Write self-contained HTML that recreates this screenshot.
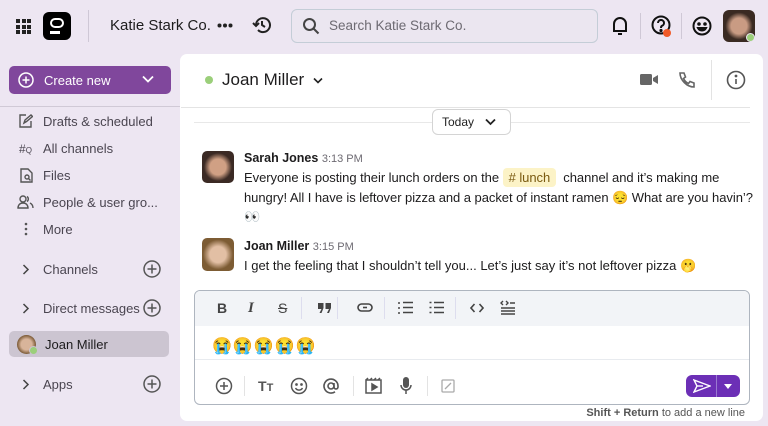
<!DOCTYPE html>
<html><head><meta charset="utf-8"><style>
*{box-sizing:border-box;margin:0;padding:0}
body{width:768px;height:426px;background:#ede6f2;font-family:"Liberation Sans","Noto Sans CJK SC",sans-serif;position:relative;overflow:hidden;color:#1d1c1d}
.a{position:absolute}
.side{font-size:13px;color:#4a4550;white-space:nowrap}
svg{display:block}
</style></head><body>
<!-- top bar -->
<div class="a" style="left:16px;top:19px;width:15px;height:15px;display:grid;grid-template-columns:repeat(3,4px);gap:1.5px">
<i style="background:#222"></i><i style="background:#222"></i><i style="background:#222"></i><i style="background:#222"></i><i style="background:#222"></i><i style="background:#222"></i><i style="background:#222"></i><i style="background:#222"></i><i style="background:#222"></i></div>
<div class="a" style="left:43px;top:12px;width:28px;height:28px;background:#000;border-radius:6px">
<div class="a" style="left:7px;top:6px;width:14px;height:10px;border:2.5px solid #fff;border-radius:5px"></div>
<div class="a" style="left:7px;top:19px;width:10px;height:2.5px;background:#fff"></div></div>
<div class="a" style="left:88px;top:10px;width:1px;height:32px;background:#cfc8d6"></div>
<div class="a" style="left:110px;top:17px;font-size:15px;color:#1d1c1d">Katie Stark Co.</div>
<svg class="a" style="left:217px;top:23px" width="16" height="5" viewBox="0 0 16 5" fill="#222"><circle cx="2.5" cy="2.5" r="2"/><circle cx="8" cy="2.5" r="2"/><circle cx="13.5" cy="2.5" r="2"/></svg>
<svg class="a" style="left:252px;top:15px" width="20" height="20" viewBox="0 0 20 20" fill="none" stroke="#222" stroke-width="2"><path d="M4 10a7 7 0 1 1 2 5"/><path d="M1 8l3 3 3-3"/><path d="M10 6v4l3 2"/></svg>
<div class="a" style="left:291px;top:9px;width:307px;height:34px;border:1.5px solid #c4cdd7;border-radius:6px;background:#ebe6f0"></div>
<svg class="a" style="left:302px;top:17px" width="18" height="18" viewBox="0 0 18 18" fill="none" stroke="#444" stroke-width="2"><circle cx="7.5" cy="7.5" r="5.5"/><path d="M11.5 11.5l5 5"/></svg>
<div class="a" style="left:329px;top:18px;font-size:13.5px;color:#6d6a72">Search Katie Stark Co.</div>
<svg class="a" style="left:611px;top:15px" width="18" height="22" viewBox="0 0 18 22" fill="none" stroke="#111" stroke-width="2"><path d="M3 16V9a6 6 0 0 1 12 0v7H2h14"/><path d="M7 19h4"/></svg>
<div class="a" style="left:640px;top:13px;width:1px;height:26px;background:#cfc8d6"></div>
<svg class="a" style="left:651px;top:15px" width="22" height="22" viewBox="0 0 22 22" fill="none" stroke="#111" stroke-width="2"><circle cx="10" cy="10" r="8.5"/><path d="M7 8a3 3 0 1 1 4 2.8c-1 .5-1 1-1 2.2"/><circle cx="10" cy="15.5" r=".6" fill="#111"/></svg>
<div class="a" style="left:663px;top:29px;width:8px;height:8px;border-radius:50%;background:#f05a28"></div>
<div class="a" style="left:681px;top:13px;width:1px;height:26px;background:#cfc8d6"></div>
<svg class="a" style="left:692px;top:16px" width="20" height="20" viewBox="0 0 20 20" fill="none" stroke="#111" stroke-width="2"><circle cx="10" cy="10" r="8.5"/><circle cx="7" cy="8" r=".8" fill="#111"/><circle cx="13" cy="8" r=".8" fill="#111"/><path d="M6 12a4.5 4.5 0 0 0 8 0z" fill="#111"/></svg>
<div class="a" style="left:723px;top:10px;width:32px;height:32px;border-radius:6px;background:radial-gradient(circle at 50% 50%,#c99b83 0 35%,#3a2a22 60%);"></div>
<div class="a" style="left:746px;top:33px;width:9px;height:9px;border-radius:50%;background:#9bcf7a;border:1.5px solid #ede6f2"></div>

<!-- sidebar -->
<div class="a" style="left:9px;top:66px;width:162px;height:28px;background:#80479c;border-radius:5px"></div>
<svg class="a" style="left:18px;top:72px" width="16" height="16" viewBox="0 0 16 16" fill="none" stroke="#fff" stroke-width="1.5"><circle cx="8" cy="8" r="7"/><path d="M8 4.5v7M4.5 8h7"/></svg>
<div class="a" style="left:44px;top:73px;font-size:13px;color:#fff">Create new</div>
<svg class="a" style="left:142px;top:75px" width="12" height="8" viewBox="0 0 12 8" fill="none" stroke="#fff" stroke-width="1.8"><path d="M1 1.5l5 5 5-5"/></svg>
<div class="a" style="left:0;top:106px;width:180px;height:1px;background:#d0c9d6"></div>
<svg class="a" style="left:19px;top:114px" width="14" height="14" viewBox="0 0 14 14" fill="none" stroke="#555" stroke-width="1.4"><path d="M7 1H1v12h11V7"/><path d="M5 9l1-3 6-5 1.5 1.5-6 5z"/></svg>
<div class="a side" style="left:43px;top:114px">Drafts &amp; scheduled</div>
<div class="a side" style="left:19px;top:142px;font-size:12px">#<span style="font-size:8px">Q</span></div>
<div class="a side" style="left:43px;top:141px">All channels</div>
<svg class="a" style="left:20px;top:168px" width="13" height="15" viewBox="0 0 13 15" fill="none" stroke="#555" stroke-width="1.4"><path d="M8 1H1v13h11V5z"/><circle cx="7" cy="9" r="2"/><path d="M8.5 10.5l2 2"/></svg>
<div class="a side" style="left:43px;top:168px">Files</div>
<svg class="a" style="left:17px;top:195px" width="17" height="14" viewBox="0 0 17 14" fill="none" stroke="#555" stroke-width="1.4"><circle cx="6" cy="4" r="3"/><path d="M1 13c0-3 2-5 5-5s5 2 5 5z"/><path d="M10 1.5a3 3 0 0 1 0 5M13 8c2 1 3 3 3 5"/></svg>
<div class="a side" style="left:43px;top:195px">People &amp; user gro...</div>
<svg class="a" style="left:24px;top:222px" width="4" height="14" viewBox="0 0 4 14" fill="#555"><circle cx="2" cy="2" r="1.3"/><circle cx="2" cy="7" r="1.3"/><circle cx="2" cy="12" r="1.3"/></svg>
<div class="a side" style="left:43px;top:222px">More</div>
<svg class="a" style="left:22px;top:264px" width="8" height="11" viewBox="0 0 8 11" fill="none" stroke="#444" stroke-width="1.5"><path d="M1.5 1l4.5 4.5L1.5 10"/></svg>
<div class="a side" style="left:43px;top:262px">Channels</div>
<svg class="a" style="left:143px;top:260px" width="18" height="18" viewBox="0 0 18 18" fill="none" stroke="#555" stroke-width="1.5"><circle cx="9" cy="9" r="8"/><path d="M9 4.5v9M4.5 9h9"/></svg>
<svg class="a" style="left:22px;top:303px" width="8" height="11" viewBox="0 0 8 11" fill="none" stroke="#444" stroke-width="1.5"><path d="M1.5 1l4.5 4.5L1.5 10"/></svg>
<div class="a side" style="left:43px;top:301px">Direct messages</div>
<svg class="a" style="left:143px;top:299px" width="18" height="18" viewBox="0 0 18 18" fill="none" stroke="#555" stroke-width="1.5"><circle cx="9" cy="9" r="8"/><path d="M9 4.5v9M4.5 9h9"/></svg>
<div class="a" style="left:9px;top:331px;width:160px;height:26px;background:#ccc5d1;border-radius:5px"></div>
<div class="a" style="left:17px;top:335px;width:19px;height:19px;border-radius:50%;background:radial-gradient(circle,#d8b49a 0 40%,#7b5a36 70%)"></div>
<div class="a" style="left:29px;top:346px;width:9px;height:9px;border-radius:50%;background:#9bcf7a;border:1.5px solid #ccc5d1"></div>
<div class="a side" style="left:45px;top:337px;color:#1d1c1d">Joan Miller</div>
<svg class="a" style="left:22px;top:379px" width="8" height="11" viewBox="0 0 8 11" fill="none" stroke="#444" stroke-width="1.5"><path d="M1.5 1l4.5 4.5L1.5 10"/></svg>
<div class="a side" style="left:43px;top:377px">Apps</div>
<svg class="a" style="left:143px;top:375px" width="18" height="18" viewBox="0 0 18 18" fill="none" stroke="#555" stroke-width="1.5"><circle cx="9" cy="9" r="8"/><path d="M9 4.5v9M4.5 9h9"/></svg>

<!-- main -->
<div class="a" style="left:180px;top:54px;width:583px;height:367px;background:#fff;border-radius:7px"></div>
<div class="a" style="left:205px;top:76px;width:8px;height:8px;border-radius:50%;background:#9bcf7a"></div>
<div class="a" style="left:222px;top:70px;font-size:17px;color:#1d1c1d">Joan Miller</div>
<svg class="a" style="left:313px;top:77px" width="10" height="7" viewBox="0 0 10 7" fill="none" stroke="#222" stroke-width="1.6"><path d="M1 1.5l4 4 4-4"/></svg>
<svg class="a" style="left:640px;top:73px" width="19" height="13" viewBox="0 0 19 13" fill="#666"><rect x="0" y="1" width="12" height="11" rx="1.5"/><path d="M13 5l5-3v9l-5-3z"/></svg>
<svg class="a" style="left:678px;top:71px" width="18" height="18" viewBox="0 0 18 18" fill="none" stroke="#666" stroke-width="1.6"><path d="M2 2h4l1.5 4-2 1.5a10 10 0 0 0 5 5l1.5-2 4 1.5v4C9 16 2 9 2 2z"/></svg>
<div class="a" style="left:711px;top:60px;width:1px;height:40px;background:#e3e3e3"></div>
<svg class="a" style="left:726px;top:70px" width="20" height="20" viewBox="0 0 20 20" fill="none" stroke="#555" stroke-width="1.6"><circle cx="10" cy="10" r="8.5"/><path d="M10 9v5"/><circle cx="10" cy="6" r=".6" fill="#555"/></svg>
<div class="a" style="left:181px;top:107px;width:569px;height:1px;background:#e4e4e4"></div>
<div class="a" style="left:194px;top:122px;width:556px;height:1px;background:#e8e8e8"></div>
<div class="a" style="left:432px;top:109px;width:79px;height:26px;background:#fff;border:1px solid #d4d4d4;border-radius:6px"></div>
<div class="a" style="left:442px;top:115px;font-size:12px;color:#222">Today</div>
<svg class="a" style="left:485px;top:118px" width="11" height="8" viewBox="0 0 11 8" fill="none" stroke="#222" stroke-width="1.8"><path d="M1 1.5l4.5 4.5 4.5-4.5"/></svg>

<div class="a" style="left:202px;top:151px;width:32px;height:32px;border-radius:5px;background:radial-gradient(circle at 50% 50%,#d0a084 0 35%,#3b2a24 62%)"></div>
<div class="a" style="left:244px;top:151px;font-size:12.5px;font-weight:bold">Sarah Jones <span style="font-weight:normal;font-size:11px;color:#6d6a72">3:13 PM</span></div>
<div class="a" style="left:244px;top:168px;width:512px;font-size:13px;line-height:19.5px;color:#1d1c1d;letter-spacing:-0.05px">Everyone is posting their lunch orders on the <span style="background:#fcf3c7;color:#7a5a10;padding:2px 6px;border-radius:4px">#&nbsp;lunch</span>&nbsp; channel and it’s making me hungry! All I have is leftover pizza and a packet of instant ramen 😔 What are you havin’? 👀</div>

<div class="a" style="left:202px;top:238px;width:32px;height:33px;border-radius:5px;background:radial-gradient(circle at 50% 50%,#e2bfa4 0 35%,#7d5c34 65%)"></div>
<div class="a" style="left:244px;top:239px;font-size:12.5px;font-weight:bold">Joan Miller <span style="font-weight:normal;font-size:11px;color:#6d6a72">3:15 PM</span></div>
<div class="a" style="left:244px;top:256px;font-size:13px;line-height:19.5px">I get the feeling that I shouldn’t tell you... Let’s just say it’s not leftover pizza 🫢</div>

<!-- composer -->
<div class="a" style="left:194px;top:290px;width:556px;height:115px;border:1px solid #aeb5bf;border-radius:6px;overflow:hidden;background:#fff">
<div style="height:35px;background:#f2f4f7"></div>
<div style="height:1px;background:#e8ebef;margin-top:33px"></div>
</div>
<div class="a" style="left:217px;top:300px;font-size:14px;font-weight:bold;color:#444">B</div>
<div class="a" style="left:248px;top:300px;font-size:15px;font-style:italic;font-family:'Liberation Serif',serif;font-weight:bold;color:#444">I</div>
<div class="a" style="left:278px;top:300px;font-size:14px;color:#444;text-decoration:line-through">S</div>
<div class="a" style="left:301px;top:297px;width:1px;height:22px;background:#dde"></div>
<svg class="a" style="left:318px;top:303px" width="14" height="10" viewBox="0 0 14 10" fill="#444"><path d="M0 0h5.5v5L3.5 10H1.5l2-4H0zM7.5 0H13v5L11 10H9l2-4H7.5z"/></svg>
<div class="a" style="left:337px;top:297px;width:1px;height:22px;background:#dde"></div>
<svg class="a" style="left:357px;top:303px" width="16" height="9" viewBox="0 0 16 9" fill="none" stroke="#444" stroke-width="1.6"><rect x="1" y="1" width="14" height="7" rx="3.5"/><path d="M6 4.5h4"/></svg>
<div class="a" style="left:384px;top:297px;width:1px;height:22px;background:#dde"></div>
<svg class="a" style="left:398px;top:301px" width="15" height="13" viewBox="0 0 15 13" fill="none" stroke="#444" stroke-width="1.5"><path d="M5 1.5h10M5 6.5h10M5 11.5h10M1 1v2M1 6v2M1 11v2"/></svg>
<svg class="a" style="left:429px;top:301px" width="15" height="13" viewBox="0 0 15 13" fill="none" stroke="#444" stroke-width="1.5"><path d="M5 1.5h10M5 6.5h10M5 11.5h10"/><path d="M0.5 1.5h2M0.5 6.5h2M0.5 11.5h2"/></svg>
<div class="a" style="left:455px;top:297px;width:1px;height:22px;background:#dde"></div>
<svg class="a" style="left:470px;top:303px" width="14" height="10" viewBox="0 0 14 10" fill="none" stroke="#444" stroke-width="1.6"><path d="M4.5 1L1 5l3.5 4M9.5 1L13 5l-3.5 4"/></svg>
<svg class="a" style="left:500px;top:300px" width="15" height="15" viewBox="0 0 15 15" fill="none" stroke="#444" stroke-width="1.4"><path d="M3 1L1 3l2 2M6 1l2 2-2 2M10 3h5M1 8h14M1 11h14M1 14h14"/></svg>
<div class="a" style="left:212px;top:336px;font-size:16px;letter-spacing:1px">😭😭😭😭😭</div>
<svg class="a" style="left:215px;top:377px" width="18" height="18" viewBox="0 0 18 18" fill="none" stroke="#555" stroke-width="1.5"><circle cx="9" cy="9" r="7.5"/><path d="M9 5v8M5 9h8"/></svg>
<div class="a" style="left:244px;top:376px;width:1px;height:20px;background:#e3e3e3"></div>
<div class="a" style="left:258px;top:378px;font-size:14px;font-weight:bold;color:#555">T<span style="font-size:11px">T</span></div>
<svg class="a" style="left:290px;top:377px" width="18" height="18" viewBox="0 0 18 18" fill="none" stroke="#555" stroke-width="1.5"><circle cx="9" cy="9" r="7.5"/><circle cx="6.5" cy="7.5" r=".6" fill="#555"/><circle cx="11.5" cy="7.5" r=".6" fill="#555"/><path d="M5.5 11a4 4 0 0 0 7 0"/></svg>
<svg class="a" style="left:322px;top:377px" width="18" height="18" viewBox="0 0 18 18" fill="none" stroke="#555" stroke-width="1.6"><circle cx="9" cy="9" r="3"/><path d="M12 6v4a2 2 0 0 0 4 0V9a7 7 0 1 0-3 5.8"/></svg>
<div class="a" style="left:353px;top:376px;width:1px;height:20px;background:#e3e3e3"></div>
<svg class="a" style="left:365px;top:377px" width="17" height="17" viewBox="0 0 17 17" fill="none" stroke="#555" stroke-width="1.5"><rect x="1" y="3" width="15" height="13"/><path d="M1 3l2-2M5 3l2-2M9 3l2-2M13 3l2-2"/><path d="M7 7v6l5-3z" fill="#555"/></svg>
<svg class="a" style="left:400px;top:377px" width="12" height="18" viewBox="0 0 12 18" fill="#555"><rect x="3" y="0" width="6" height="11" rx="3"/><path d="M1 8a5 5 0 0 0 10 0M6 13v4" fill="none" stroke="#555" stroke-width="1.5"/></svg>
<div class="a" style="left:427px;top:376px;width:1px;height:20px;background:#e3e3e3"></div>
<svg class="a" style="left:441px;top:379px" width="14" height="14" viewBox="0 0 14 14" fill="none" stroke="#aaa" stroke-width="1.3"><rect x="1" y="1" width="12" height="12" rx="1"/><path d="M4 10l6-6"/></svg>
<div class="a" style="left:686px;top:375px;width:54px;height:22px;background:#6c2fb6;border-radius:6px"></div>
<div class="a" style="left:716px;top:375px;width:1px;height:22px;background:#9a79d0"></div>
<svg class="a" style="left:693px;top:379px" width="18" height="14" viewBox="0 0 18 14" fill="none" stroke="#fff" stroke-width="1.4"><path d="M1 1l16 6-16 6 3-6z"/><path d="M4 7h6"/></svg>
<svg class="a" style="left:724px;top:384px" width="8" height="5" viewBox="0 0 8 5" fill="#fff"><path d="M0 0h8L4 5z"/></svg>
<div class="a" style="right:23px;top:407px;font-size:11px;color:#555"><b>Shift + Return</b> to add a new line</div>
</body></html>
